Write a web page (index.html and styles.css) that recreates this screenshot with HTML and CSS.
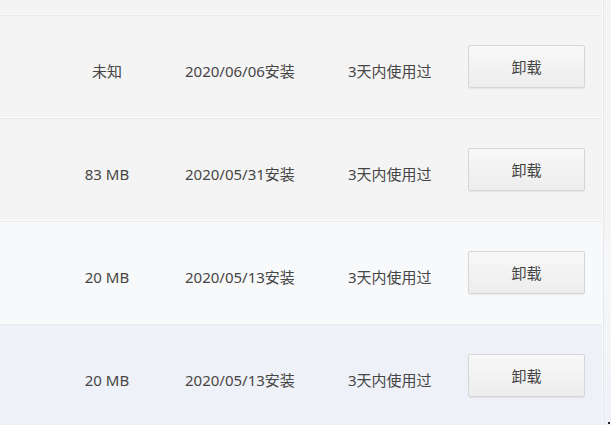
FILE: index.html
```html
<!DOCTYPE html>
<html lang="zh-CN">
<head>
<meta charset="utf-8">
<title>软件卸载</title>
<link rel="stylesheet" href="styles.css">
</head>
<body>
<div class="frame">
  <div class="list">
    <div class="top"></div>
    <div class="row r1">
      <span></span>
      <span class="cell size">未知</span>
      <span></span>
      <span class="cell date">2020/06/06安装</span>
      <span class="cell used">3天内使用过</span>
      <button class="btn">卸载</button>
    </div>
    <div class="row r2">
      <span></span>
      <span class="cell size">83 MB</span>
      <span></span>
      <span class="cell date">2020/05/31安装</span>
      <span class="cell used">3天内使用过</span>
      <button class="btn">卸载</button>
    </div>
    <div class="row r3">
      <span></span>
      <span class="cell size">20 MB</span>
      <span></span>
      <span class="cell date">2020/05/13安装</span>
      <span class="cell used">3天内使用过</span>
      <button class="btn">卸载</button>
    </div>
    <div class="row r4">
      <span></span>
      <span class="cell size">20 MB</span>
      <span></span>
      <span class="cell date">2020/05/13安装</span>
      <span class="cell used">3天内使用过</span>
      <button class="btn">卸载</button>
    </div>
  </div>
  <div class="side"></div>
  <span class="grip"></span>
</div>
</body>
</html>
```
FILE: styles.css
```css
html, body {
  margin: 0;
  padding: 0;
}
body {
  width: 611px;
  height: 425px;
  overflow: hidden;
  font-family: "Noto Sans", "Noto Sans CJK SC", sans-serif;
  font-size: 15px;
  color: #464646;
  background: #f4f4f4;
}
.frame {
  position: relative;
  display: flex;
  height: 425px;
  background: linear-gradient(#f4f4f4 0, #f4f4f4 220px, #f7f8fa 260px, #eef1f6 425px);
}
.list {
  width: 602px;
  border-right: 1px solid #fbfbfc;
  box-shadow: 1px 0 0 #e6e8ec;
}
.side {
  flex: 1;
}
.top {
  height: 14px;
  background: #f4f4f4;
  border-bottom: 1px solid #fbfbfb;
  box-shadow: 0 1px 0 #e8e8e8;
  margin-bottom: 1px;
}
.row {
  display: grid;
  grid-template-columns: 60px 94px 31px 163px 120px 117px;
  align-items: center;
  height: 101px;
  border-bottom: 1px solid #fcfcfd;
  box-shadow: 0 1px 0 #e6e8eb;
  margin-bottom: 1px;
}
.r1, .r2 { background: #f4f4f4; }
.r3 { background: #f8f9fb; }
.r4 { background: #eef1f7; border-bottom: 0; box-shadow: none; }
.cell {
  padding-top: 8px;
  white-space: nowrap;
}
.size { text-align: center; }
.btn {
  height: 43px;
  width: 117px;
  padding: 0;
  font-family: inherit;
  font-size: 15px;
  color: #444;
  border: 1px solid #d6d6d6;
  border-radius: 2px;
  background: linear-gradient(#f8f8f8, #ededed);
  box-shadow: 0 1px 1px rgba(0, 0, 0, 0.06);
}
.grip {
  position: absolute;
  right: 1px;
  bottom: 1px;
  width: 2px;
  height: 2px;
  background: #222;
}
```
